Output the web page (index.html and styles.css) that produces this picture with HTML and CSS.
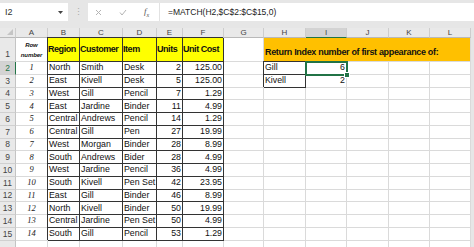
FILE: index.html
```html
<!DOCTYPE html>
<html lang="en">
<head>
    <meta charset="UTF-8">
    <title>MATCH</title>
    <link rel="stylesheet" href="styles.css">
</head>
<body>

    <!-- formula bar -->
    <div class="fbar">
        <div class="namebox">
            <span>I2</span>
            <svg class="drop" width="5" height="3" viewBox="0 0 5 3"><path d="M0 0h5L2.5 3z" fill="#444"/></svg>
        </div>
        <span class="dots">⋮</span>
        <div class="formula">
            <div class="btns">
                <svg width="7" height="7" viewBox="0 0 7 7"><path d="M1 1l5 5M6 1L1 6" stroke="#b4b4b4" stroke-width="1"/></svg>
                <svg width="8" height="7" viewBox="0 0 8 7"><path d="M1 3.5l2 2.5L7 1" stroke="#b4b4b4" stroke-width="1" fill="none"/></svg>
                <span class="fx">f<sub>x</sub></span>
            </div>
            <span class="ftext">=MATCH(H2,$C$2:$C$15,0)</span>
        </div>
    </div>

    <div class="sheet">
        <!-- column headers -->
        <div class="h corner"></div>
        <div class="h">A</div><div class="h">B</div><div class="h">C</div><div class="h">D</div>
        <div class="h">E</div><div class="h">F</div><div class="h">G</div><div class="h">H</div>
        <div class="h sel">I</div><div class="h">J</div><div class="h">K</div><div class="h">L</div>

        <!-- row 1 -->
        <div class="n bot">1</div>
        <div class="c a1"><span>Row<br>number</span></div>
        <div class="c bx y">Region</div>
        <div class="c bx y">Customer</div>
        <div class="c bx y">Item</div>
        <div class="c bx y">Units</div>
        <div class="c bx y">Unit Cost</div>
        <div class="c"></div>
        <div class="c o">Return Index number of first appearance of:</div>

        <div class="n sel">2</div><div class="c a">1</div>
        <div class="c bx">North</div><div class="c bx">Smith</div><div class="c bx">Desk</div><div class="c bx num">2</div><div class="c bx num">125.00</div>
        <div class="c"></div><div class="c bx">Gill</div><div class="c num cur">6</div><div class="c"></div><div class="c"></div><div class="c"></div>

        <div class="n">3</div><div class="c a">2</div>
        <div class="c bx">East</div><div class="c bx">Kivell</div><div class="c bx">Desk</div><div class="c bx num">5</div><div class="c bx num">125.00</div>
        <div class="c"></div><div class="c bx">Kivell</div><div class="c num">2</div><div class="c"></div><div class="c"></div><div class="c"></div>

        <div class="n">4</div><div class="c a">3</div>
        <div class="c bx">West</div><div class="c bx">Gill</div><div class="c bx">Pencil</div><div class="c bx num">7</div><div class="c bx num">1.29</div>
        <div class="c"></div><div class="c"></div><div class="c"></div><div class="c"></div><div class="c"></div><div class="c"></div>

        <div class="n">5</div><div class="c a">4</div>
        <div class="c bx">East</div><div class="c bx">Jardine</div><div class="c bx">Binder</div><div class="c bx num">11</div><div class="c bx num">4.99</div>
        <div class="c"></div><div class="c"></div><div class="c"></div><div class="c"></div><div class="c"></div><div class="c"></div>

        <div class="n">6</div><div class="c a">5</div>
        <div class="c bx">Central</div><div class="c bx">Andrews</div><div class="c bx">Pencil</div><div class="c bx num">14</div><div class="c bx num">1.29</div>
        <div class="c"></div><div class="c"></div><div class="c"></div><div class="c"></div><div class="c"></div><div class="c"></div>

        <div class="n">7</div><div class="c a">6</div>
        <div class="c bx">Central</div><div class="c bx">Gill</div><div class="c bx">Pen</div><div class="c bx num">27</div><div class="c bx num">19.99</div>
        <div class="c"></div><div class="c"></div><div class="c"></div><div class="c"></div><div class="c"></div><div class="c"></div>

        <div class="n">8</div><div class="c a">7</div>
        <div class="c bx">West</div><div class="c bx">Morgan</div><div class="c bx">Binder</div><div class="c bx num">28</div><div class="c bx num">8.99</div>
        <div class="c"></div><div class="c"></div><div class="c"></div><div class="c"></div><div class="c"></div><div class="c"></div>

        <div class="n">9</div><div class="c a">8</div>
        <div class="c bx">South</div><div class="c bx">Andrews</div><div class="c bx">Bider</div><div class="c bx num">28</div><div class="c bx num">4.99</div>
        <div class="c"></div><div class="c"></div><div class="c"></div><div class="c"></div><div class="c"></div><div class="c"></div>

        <div class="n">10</div><div class="c a">9</div>
        <div class="c bx">West</div><div class="c bx">Jardine</div><div class="c bx">Pencil</div><div class="c bx num">36</div><div class="c bx num">4.99</div>
        <div class="c"></div><div class="c"></div><div class="c"></div><div class="c"></div><div class="c"></div><div class="c"></div>

        <div class="n">11</div><div class="c a">10</div>
        <div class="c bx">South</div><div class="c bx">Kivell</div><div class="c bx">Pen Set</div><div class="c bx num">42</div><div class="c bx num">23.95</div>
        <div class="c"></div><div class="c"></div><div class="c"></div><div class="c"></div><div class="c"></div><div class="c"></div>

        <div class="n">12</div><div class="c a">11</div>
        <div class="c bx">East</div><div class="c bx">Gill</div><div class="c bx">Binder</div><div class="c bx num">46</div><div class="c bx num">8.99</div>
        <div class="c"></div><div class="c"></div><div class="c"></div><div class="c"></div><div class="c"></div><div class="c"></div>

        <div class="n">13</div><div class="c a">12</div>
        <div class="c bx">North</div><div class="c bx">Kivell</div><div class="c bx">Binder</div><div class="c bx num">50</div><div class="c bx num">19.99</div>
        <div class="c"></div><div class="c"></div><div class="c"></div><div class="c"></div><div class="c"></div><div class="c"></div>

        <div class="n">14</div><div class="c a">13</div>
        <div class="c bx">Central</div><div class="c bx">Jardine</div><div class="c bx">Pen Set</div><div class="c bx num">50</div><div class="c bx num">4.99</div>
        <div class="c"></div><div class="c"></div><div class="c"></div><div class="c"></div><div class="c"></div><div class="c"></div>

        <div class="n">15</div><div class="c a">14</div>
        <div class="c bx">South</div><div class="c bx">Gill</div><div class="c bx">Pencil</div><div class="c bx num">53</div><div class="c bx num">1.29</div>
        <div class="c"></div><div class="c"></div><div class="c"></div><div class="c"></div><div class="c"></div><div class="c"></div>

        <div class="n"></div><div class="c"></div>
        <div class="c"></div><div class="c"></div><div class="c"></div><div class="c"></div><div class="c"></div>
        <div class="c"></div><div class="c"></div><div class="c"></div><div class="c"></div><div class="c"></div><div class="c"></div>
    </div>

</body>
</html>
```

FILE: styles.css
```css
body {
    margin: 0;
    background-color: #e6e6e6;
    font-family: "Liberation Sans", Arial, sans-serif;
    color: #111;
    overflow: hidden;
}

/* formula bar */
.fbar {
    display: flex;
    align-items: center;
    height: 28px;
    padding-bottom: 4px;
    box-sizing: border-box;
    background-color: #e6e6e6;
}

.namebox {
    display: flex;
    align-items: center;
    justify-content: space-between;
    width: 68px;
    height: 18px;
    padding: 0 5px;
    box-sizing: border-box;
    background-color: #fff;
    font-size: 9px;
    color: #333;
}

.dots {
    width: 20px;
    text-align: center;
    font-size: 9px;
    color: #aaa;
}

.formula {
    display: flex;
    align-items: center;
    flex: 1;
    height: 18px;
    background-color: #fff;
}

.btns {
    display: flex;
    align-items: center;
    gap: 17px;
    width: 72px;
    height: 100%;
    padding-left: 7px;
    box-sizing: border-box;
    border-right: 1px solid #e2e2e2;
}

.fx {
    font-family: "Liberation Serif", serif;
    font-style: italic;
    font-size: 9px;
    color: #555;
}

.fx sub {
    font-size: 6px;
}

.ftext {
    padding-left: 8px;
    font-size: 8.5px;
    color: #222;
}

/* sheet grid */
.sheet {
    display: grid;
    grid-template-columns: 16px 32px 32px 43px 34px 26px 41px 40px 42px 41px 42px 41px 41px;
    grid-template-rows: 10px 24px repeat(15, 12.75px);
    width: 471px;
    background-color: #fff;
}

.sheet > div {
    box-sizing: border-box;
    border-right: 1px solid #dadada;
    border-bottom: 1px solid #dadada;
    overflow: hidden;
    white-space: nowrap;
}

.h {
    display: flex;
    align-items: center;
    justify-content: center;
    background-color: #e9e9e9;
    font-size: 8px;
    color: #444;
    border-right-color: #cdcdcd !important;
    border-bottom-color: #b9b9b9 !important;
}

.h.sel {
    background-color: #d3d3d3;
    border-bottom: 1px solid #217346 !important;
}

.corner {
    position: relative;
}

.corner::after {
    content: "";
    position: absolute;
    right: 2px;
    bottom: 2px;
    border-left: 6px solid transparent;
    border-bottom: 6px solid #c4c4c4;
}

.n {
    display: flex;
    align-items: center;
    justify-content: center;
    background-color: #e9e9e9;
    font-size: 8.5px;
    color: #444;
    border-right-color: #c4c4c4 !important;
    border-bottom-color: #d0d0d0 !important;
}

.n.bot {
    align-items: flex-end;
    padding-bottom: 2px;
}

.n.sel {
    background-color: #d3d3d3;
    color: #217346;
    border-right: 1px solid #217346 !important;
}

.c {
    display: flex;
    align-items: center;
    padding: 0 1px 0 1px;
    font-size: 8.8px;
    line-height: 11px;
}

.num {
    justify-content: flex-end;
}

/* bordered cells */
.bx {
    border-right-color: #333 !important;
    border-bottom-color: #333 !important;
    box-shadow: -1px -1px 0 #333;
}

.y {
    background-color: #ffff00;
    font-weight: bold;
    font-size: 9px;
    letter-spacing: -0.45px;
    padding-left: 0;
}

.o {
    grid-column: span 5;
    align-items: flex-end;
    padding-bottom: 3px;
    background-color: #ffc000;
    font-weight: bold;
    font-size: 9px;
    letter-spacing: -0.33px;
}

.a1 {
    justify-content: center;
    text-align: center;
    font-weight: bold;
    font-style: italic;
    font-size: 6px;
    line-height: 10px;
    letter-spacing: -0.1px;
}

.a {
    justify-content: center;
    font-family: "Liberation Serif", serif;
    font-style: italic;
    font-size: 8.5px;
    color: #222;
}

/* active cell */
.cur {
    position: relative;
    overflow: visible !important;
    outline: 2px solid #217346;
    outline-offset: -1px;
}

.cur::after {
    content: "";
    position: absolute;
    right: -4px;
    bottom: -4px;
    width: 4px;
    height: 4px;
    background-color: #217346;
    border: 1px solid #fff;
}
```
